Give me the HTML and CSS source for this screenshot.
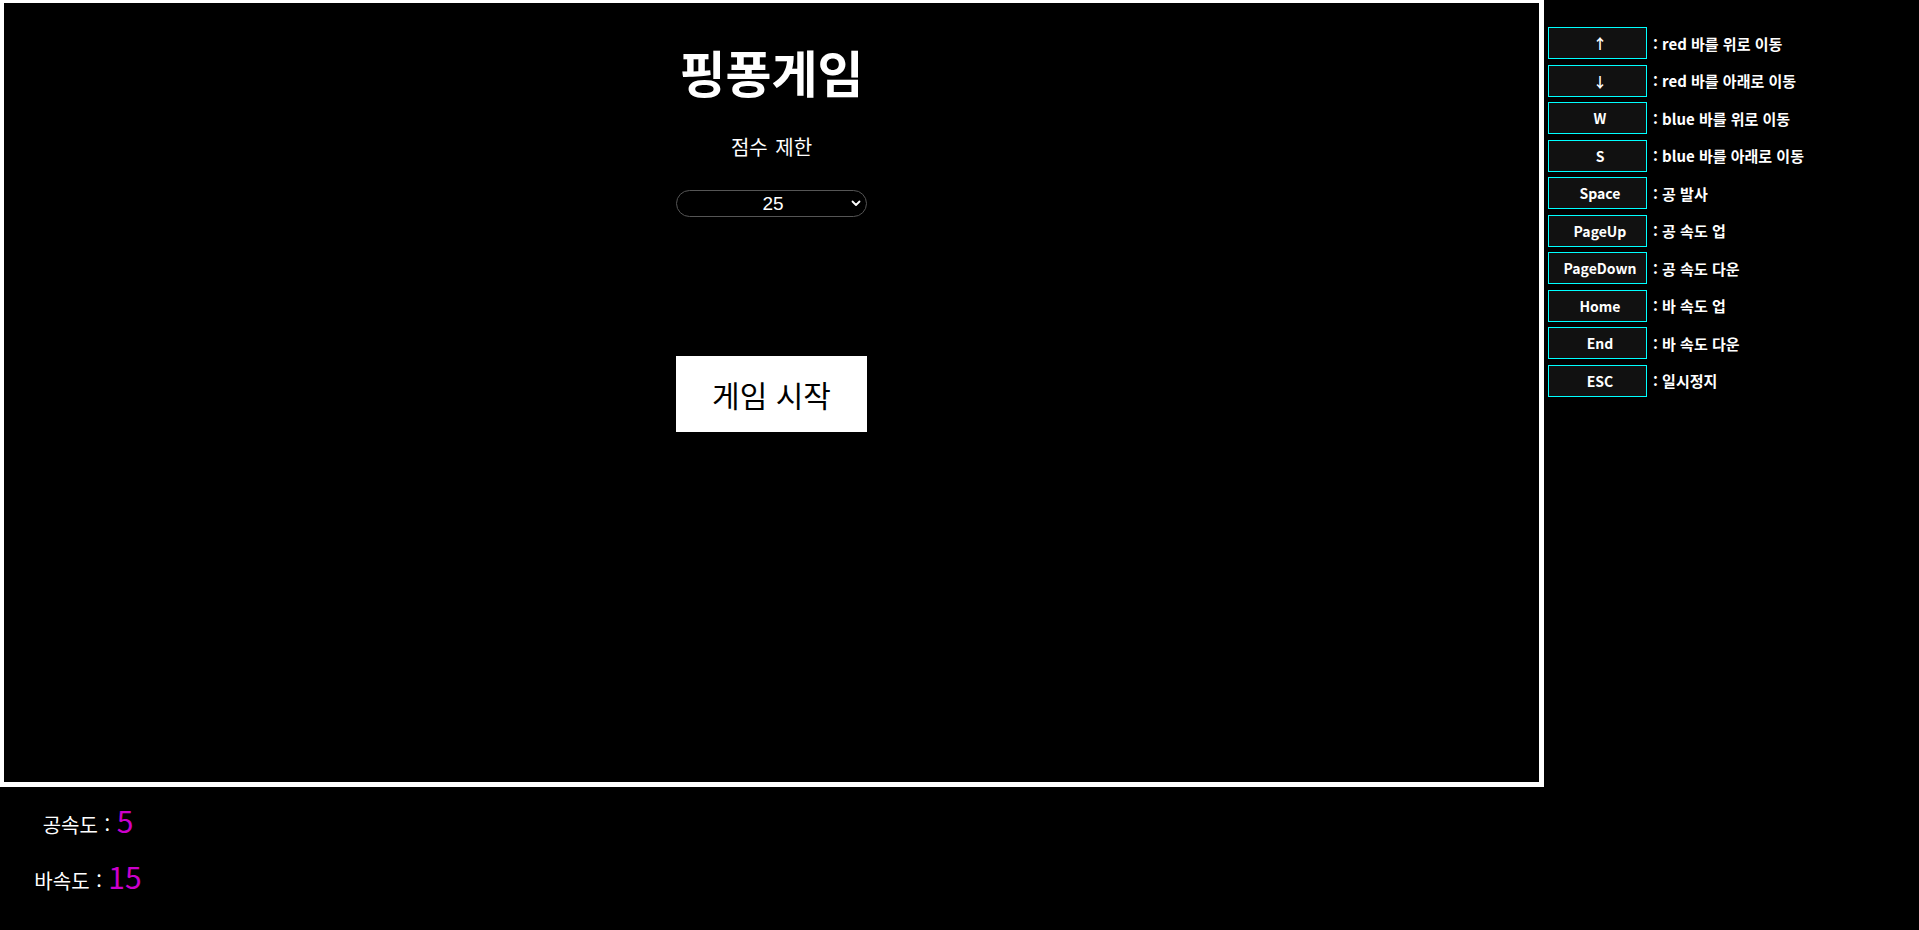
FILE: index.html
```html
<!DOCTYPE html>
<html lang="ko">
<head>
<meta charset="utf-8">
<title>핑퐁게임</title>
<link rel="stylesheet" href="styles.css">
</head>
<body>
<div class="page">
  <div class="left">
    <div class="board">
      <h1 class="title">핑퐁게임</h1>
      <p class="label">점수 제한</p>
      <span class="select-wrap">
        <select class="score">
          <option>5</option>
          <option>10</option>
          <option>15</option>
          <option>20</option>
          <option selected>25</option>
        </select>
        <svg class="chev" width="10" height="7" viewBox="0 0 10 7"><path d="M1.5 1.5 L5 5 L8.5 1.5" fill="none" stroke="#fff" stroke-width="1.8" stroke-linecap="round" stroke-linejoin="round"/></svg>
      </span>
      <button class="start">게임 시작</button>
    </div>
    <div class="stats">
      <div class="stat">공속도 : <span class="num">5</span></div>
      <div class="stat">바속도 : <span class="num">15</span></div>
    </div>
  </div>
  <div class="keys">
    <div class="row"><span class="key">↑</span><span class="desc">: red 바를 위로 이동</span></div>
    <div class="row"><span class="key">↓</span><span class="desc">: red 바를 아래로 이동</span></div>
    <div class="row"><span class="key">W</span><span class="desc">: blue 바를 위로 이동</span></div>
    <div class="row"><span class="key">S</span><span class="desc">: blue 바를 아래로 이동</span></div>
    <div class="row"><span class="key">Space</span><span class="desc">: 공 발사</span></div>
    <div class="row"><span class="key">PageUp</span><span class="desc">: 공 속도 업</span></div>
    <div class="row"><span class="key">PageDown</span><span class="desc">: 공 속도 다운</span></div>
    <div class="row"><span class="key">Home</span><span class="desc">: 바 속도 업</span></div>
    <div class="row"><span class="key">End</span><span class="desc">: 바 속도 다운</span></div>
    <div class="row"><span class="key">ESC</span><span class="desc">: 일시정지</span></div>
  </div>
</div>
</body>
</html>
```

FILE: styles.css
```css
html, body {
  margin: 0;
  padding: 0;
  background: #000;
  color: #fff;
  font-family: "Noto Sans CJK KR", "Noto Sans", sans-serif;
  overflow: hidden;
}

.page {
  display: flex;
  align-items: flex-start;
}

.board {
  box-sizing: content-box;
  width: 1535px;
  height: 779px;
  border: 5px solid #fff;
  margin: -2px 0 0 -1px;
  display: flex;
  flex-direction: column;
  align-items: center;
}

.title {
  margin: 42px 0 0;
  font-size: 50px;
  line-height: 52px;
  font-weight: 700;
}

.label {
  margin: 38px 0 0;
  font-size: 20px;
  line-height: 24px;
  word-spacing: 2px;
}

.select-wrap {
  position: relative;
  display: block;
  margin-top: 31px;
  width: 191px;
  height: 27px;
}

.score {
  -webkit-appearance: none;
  appearance: none;
  width: 191px;
  height: 27px;
  box-sizing: border-box;
  border: 1px solid #555;
  border-radius: 14px;
  background: #000;
  color: #fff;
  font-family: "Liberation Sans", Arial, sans-serif;
  font-size: 19px;
  text-align: center;
  text-align-last: center;
  padding: 0 0 0 3px;
  outline: none;
}

.chev {
  position: absolute;
  right: 6px;
  top: 10px;
}

.start {
  margin-top: 139px;
  width: 191px;
  height: 76px;
  border: none;
  background: #fff;
  color: #000;
  font-family: "Noto Sans CJK KR", sans-serif;
  font-size: 30px;
  padding: 0;
}

.stats {
  width: 176px;
  padding-top: 5px;
  text-align: center;
}

.stat {
  font-size: 20px;
  line-height: 56px;
  height: 56px;
  word-spacing: 1px;
}

.num {
  color: #cc00cc;
  font-size: 30px;
  font-weight: 400;
}

.keys {
  margin-left: 4px;
  padding-top: 27px;
  display: flex;
  flex-direction: column;
  gap: 5.5px;
}

.row {
  display: flex;
  align-items: center;
  gap: 6px;
  height: 32px;
}

.key {
  box-sizing: border-box;
  width: 99px;
  height: 32px;
  border: 1px solid #00ffff;
  background: #111;
  display: flex;
  align-items: center;
  justify-content: center;
  padding-left: 5px;
  font-size: 14px;
  font-weight: 700;
}

.desc {
  font-size: 15px;
  font-weight: 700;
  white-space: nowrap;
}
```
